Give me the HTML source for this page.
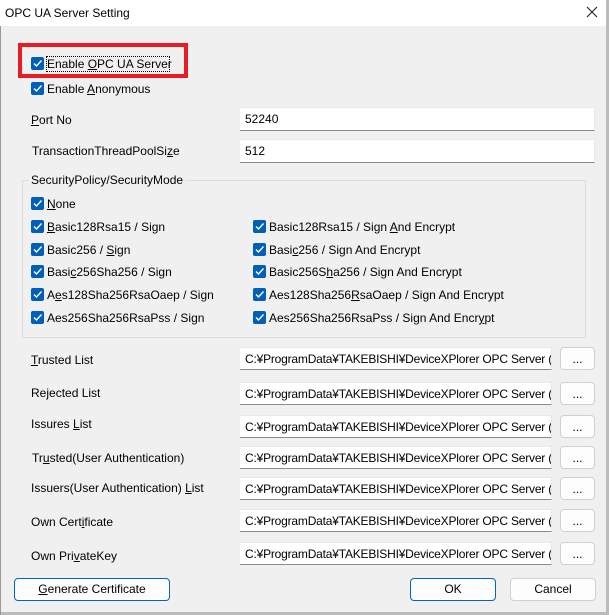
<!DOCTYPE html>
<html><head><meta charset="utf-8"><style>
*{margin:0;padding:0;box-sizing:border-box}
body{width:609px;height:615px;background:#f0f0f0;font-family:"Liberation Sans","Noto Sans CJK JP",sans-serif;font-size:12px;color:#000;position:relative;overflow:hidden}
.a{position:absolute;white-space:nowrap;line-height:14px;margin-top:1px}
.cb{position:absolute;width:13px;height:13px;background:#005fb8;border-radius:2px}
.cb svg{position:absolute;left:1px;top:1px}
.in{position:absolute;background:#fff;border-bottom:1px solid #8a8a8a;border-top:1px solid #e8e8e8;border-right:1px solid #e8e8e8;height:23px;padding:4px 0 0 5px;overflow:hidden;white-space:nowrap}
.pt{letter-spacing:-0.2px}
.bt{position:absolute;background:#fdfdfd;border:1px solid #d0d0d0;border-radius:4px;text-align:center;line-height:20px}
</style></head><body>
<div style="position:absolute;left:0;top:0;width:609px;height:26px;background:#fff"></div>
<div class="a" style="left:5px;top:5px">OPC UA Server Setting</div>
<svg style="position:absolute;left:586px;top:6px" width="12" height="12"><path d="M1 1L11 11M11 1L1 11" stroke="#222" stroke-width="1.1"/></svg>
<div style="position:absolute;left:606px;top:0;width:3px;height:615px;background:#bbb"></div>
<div style="position:absolute;left:0;top:612px;width:609px;height:3px;background:#bbb"></div>
<div style="position:absolute;left:0;top:26px;width:1px;height:589px;background:#999"></div>

<div style="position:absolute;left:18px;top:43px;width:170px;height:35px;border:4px solid #e81c24"></div>
<div style="position:absolute;left:46px;top:56px;width:124px;height:16px;border:1px dotted #000"></div>

<div id="c"></div>
<div class="a" style="left:47px;top:56px">Enable <u>O</u>PC UA Server</div>
<div class="a" style="left:47px;top:81px">Enable <u>A</u>nonymous</div>
<div class="a" style="left:31px;top:112px"><u>P</u>ort No</div>
<div class="a" style="left:32px;top:143px">TransactionThreadPoolSi<u>z</u>e</div>
<div class="in" style="left:240px;top:107px;width:355px;height:24px">52240</div>
<div class="in" style="left:240px;top:139px;width:355px;height:24px">512</div>

<div style="position:absolute;left:22px;top:180px;width:564px;height:158px;border:1px solid #dcdcdc"></div>
<div class="a" style="left:29px;top:172px;background:#f0f0f0;padding:0 2px">SecurityPolicy/SecurityMode</div>
<div class="a" style="left:47px;top:196px"><u>N</u>one</div>
<div class="a" style="left:47px;top:219px"><u>B</u>asic128Rsa15 / Sign</div>
<div class="a" style="left:47px;top:242px">Basic256 / <u>S</u>ign</div>
<div class="a" style="left:47px;top:264px">Basi<u>c</u>256Sha256 / Sign</div>
<div class="a" style="left:47px;top:287px">A<u>e</u>s128Sha256RsaOaep / Sign</div>
<div class="a" style="left:47px;top:310px">Aes256Sha256RsaPss / Si<u>g</u>n</div>
<div class="a" style="left:269px;top:219px">Basic128Rsa15 / Sign <u>A</u>nd Encrypt</div>
<div class="a" style="left:269px;top:242px">Basi<u>c</u>256 / Sign And Encrypt</div>
<div class="a" style="left:269px;top:264px">Basic256S<u>h</u>a256 / Sign And Encrypt</div>
<div class="a" style="left:269px;top:287px">Aes128Sha256<u>R</u>saOaep / Sign And Encrypt</div>
<div class="a" style="left:269px;top:310px">Aes256Sha256RsaPss / Sign And Encr<u>y</u>pt</div>

<div class="a" style="left:31px;top:352px"><u>T</u>rusted List</div>
<div class="a" style="left:31px;top:385px">Re<u>j</u>ected List</div>
<div class="a" style="left:31px;top:416px">Issures <u>L</u>ist</div>
<div class="a" style="left:32px;top:450px">Tr<u>u</u>sted(User Authentication)</div>
<div class="a" style="left:31px;top:480px">Issuers(User Authentication) <u>L</u>ist</div>
<div class="a" style="left:31px;top:514px">Own Cert<u>i</u>ficate</div>
<div class="a" style="left:31px;top:548px">Own Pri<u>v</u>ateKey</div>
<div id="p"></div>

<div class="bt" style="left:14px;top:578px;width:156px;height:23px;border-color:#0067c0"><u>G</u>enerate Certificate</div>
<div class="bt" style="left:410px;top:578px;width:86px;height:23px;border-color:#0067c0">OK</div>
<div class="bt" style="left:510px;top:578px;width:86px;height:23px">Cancel</div>

<script>
var ck='<svg width="11" height="11"><path d="M2 5.5L4.5 8L9.5 2.5" fill="none" stroke="#fff" stroke-width="1.4"/></svg>';
var pos=[[31,57],[31,82],[31,197],[31,220],[31,243],[31,265],[31,288],[31,311],[253,220],[253,243],[253,265],[253,288],[253,311]];
var h='';pos.forEach(function(p){h+='<div class="cb" style="left:'+p[0]+'px;top:'+p[1]+'px">'+ck+'</div>';});
document.getElementById('c').innerHTML=h;
var ys=[347,382,415,446,477,509,542];h='';
ys.forEach(function(y){h+='<div class="in pt" style="left:240px;top:'+y+'px;width:312px">C:¥ProgramData¥TAKEBISHI¥DeviceXPlorer OPC Server (</div><div class="bt" style="left:560px;top:'+(y)+'px;width:35px;height:23px;line-height:22px">...</div>';});
document.getElementById('p').innerHTML=h;
</script>
</body></html>
